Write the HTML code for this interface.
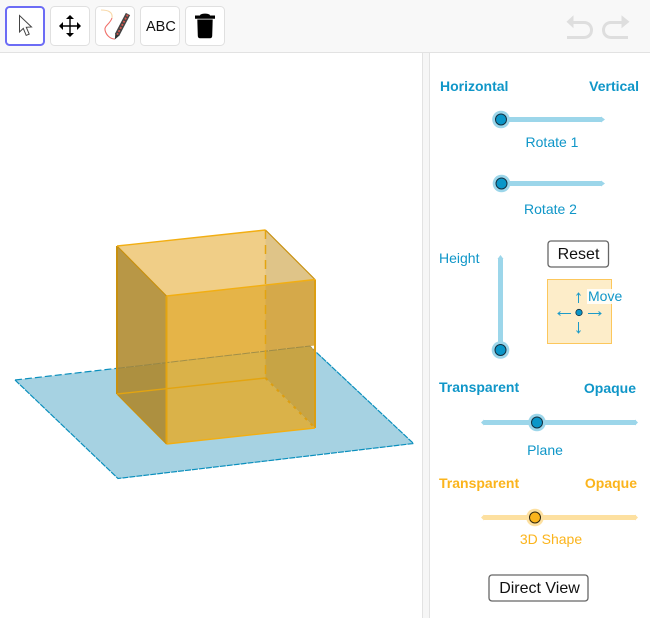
<!DOCTYPE html>
<html><head><meta charset="utf-8">
<style>
html,body{margin:0;padding:0;background:#fff;width:650px;height:620px;overflow:hidden}
svg{display:block;position:absolute;left:0;top:0}
text{font-family:"Liberation Sans",sans-serif;font-size:14px}
.b{font-weight:bold}
.c{fill:#0f96c8}
.o{fill:#fbb41c}
</style></head><body>
<svg width="650" height="620" viewBox="0 0 650 620" xmlns="http://www.w3.org/2000/svg">
<rect width="650" height="620" fill="#fff"/>
<!-- toolbar -->
<rect x="0" y="0" width="650" height="52" fill="#f8f8f8"/>
<rect x="0" y="52" width="650" height="1" fill="#e2e2e2"/>
<rect x="6" y="7" width="38" height="38" rx="3.5" fill="#fff" stroke="#6c6cf5" stroke-width="2"/>
<rect x="50.5" y="6.5" width="39" height="39" rx="4" fill="#fff" stroke="#e0e0e0"/>
<rect x="95.5" y="6.5" width="39" height="39" rx="4" fill="#fff" stroke="#e0e0e0"/>
<rect x="140.5" y="6.5" width="39" height="39" rx="4" fill="#fff" stroke="#e0e0e0"/>
<rect x="185.5" y="6.5" width="39" height="39" rx="4" fill="#fff" stroke="#e0e0e0"/>
<path d="M19.5 15.5V32l3.8-3.6 2.9 7 3-1.3-2.9-6.8 5.2-.3z" fill="#fff" stroke="#444" stroke-width="1"/>
<path d="M70 15l-4 4h8zM70 37l-4-4h8zM59 26l4-4v8zM81 26l-4-4v8z" fill="#000"/>
<path d="M70 17v18M61 26h18" stroke="#000" stroke-width="1.4" fill="none"/>
<path d="M112 18C110 24 104 26 105 30C106 35 110 39 115 39" stroke="#f0706a" stroke-width="1.100" fill="none"/>
<path d="M101 10C108 10 113 12 112 18" stroke="#f8d8a8" stroke-width="1.100" fill="none"/>
<path d="M117 35L128 14" stroke="#444" stroke-width="4.800" fill="none"/>
<path d="M117 35L128 14" stroke="#d8554c" stroke-width="1.800" fill="none" stroke-dasharray="2 1.500"/>
<path d="M114.800 39.500l.5-5.800 3.900 2.100z" fill="#333"/>
<text x="146" y="31" style="font-size:14.5px" fill="#111">ABC</text>
<path d="M195 15.500h20v3.200h-20z" fill="#000"/>
<path d="M200 15.500c0-2.500 10-2.500 10 0z" fill="#000"/>
<path d="M197.300 19.500h15.400l-.5 16.500c-.1 1.500-1 2.300-2.200 2.300h-10c-1.200 0-2.100-.8-2.200-2.300z" fill="#000"/>
<!-- undo redo -->
<g fill="none" stroke="#dedede" stroke-width="3">
<path d="M573 22.500h11c10 0 10 15 0 15h-17"/>
<path d="M622 22.500h-11c-10 0-10 15 0 15h17"/>
</g>
<path d="M566.500 21.800l7-6.500v13zM629.500 21.800l-8-6.500v13z" fill="#dedede"/>
<!-- divider -->
<rect x="422" y="53" width="8" height="565" fill="#f6f6f6"/>
<rect x="422" y="53" width="1" height="565" fill="#e2e2e2"/>
<rect x="429" y="53" width="1" height="565" fill="#e2e2e2"/>
<!-- plane -->
<polygon points="15,380 118,478.500 413.500,443.500 310,346" fill="#a6d2e2"/>
<path d="M15 380L118 478.500L413.500 443.500L316 352" fill="none" stroke="#0a8fbd" stroke-width="1.200" stroke-dasharray="6 1"/>
<path d="M15 380L117 368.300" fill="none" stroke="#0a8fbd" stroke-width="1.200" stroke-dasharray="7 3"/>
<!-- cube -->
<polygon points="117,246 265.500,230 315,279.500 166.500,296" fill="#f0ce87"/>
<polygon points="265.500,230 315,279.500 265.500,285" fill="#dfc488"/>
<polygon points="117,246 166.500,296 166.500,362.600 117,368.300" fill="#b89746"/>
<polygon points="117,368.300 166.500,362.600 166.500,444 117,394" fill="#ad9040"/>
<polygon points="166.500,296 265.500,285 265.500,351.200 166.500,362.600" fill="#e5b448"/>
<polygon points="166.500,362.600 265.500,351.200 265.500,432.800 166.500,444" fill="#dab249"/>
<polygon points="265.500,285 315,279.500 315,345.500 265.500,351.200" fill="#d5a94a"/>
<polygon points="265.500,351.200 310,346 315,351 315,428 265.500,378" fill="#c7a445"/>
<polygon points="265.500,378 315,428 265.500,433.500" fill="#dab249"/>
<path d="M117 368.300L310 346L315 351" fill="none" stroke="#8e8244" stroke-width="1" stroke-dasharray="8 1" opacity=".75"/>
<!-- edges -->
<g fill="none" stroke-linecap="butt">
<path d="M117 246V394" stroke="#c8900f" stroke-width="2"/>
<path d="M166.500 296V444" stroke="#e3a410" stroke-width="2"/>
<path d="M315 279.500V428" stroke="#dc9e12" stroke-width="2"/>
<path d="M117 246L166.500 296" stroke="#c8900f" stroke-width="1.200"/>
<path d="M117 394L166.500 444" stroke="#c8900f" stroke-width="1.200"/>
<path d="M265.500 230L315 279.500" stroke="#c8900f" stroke-width="1.200"/>
<path d="M117 246L265.500 230" stroke="#f2ae12" stroke-width="1.400"/>
<path d="M166.500 296L315 279.500" stroke="#f2ae12" stroke-width="1.400"/>
<path d="M166.500 444L315 428" stroke="#f2ae12" stroke-width="1.400"/>
<path d="M117 394L265.500 378" stroke="#e3a410" stroke-width="1.400"/>
<path d="M265.500 230V378" stroke="#e3a410" stroke-width="1.500" stroke-dasharray="9 6"/>
<path d="M265.500 378L315 428" stroke="#dc9e12" stroke-width="2" stroke-dasharray="3 5"/>
</g>
<!-- labels -->
<text class="b c" x="440" y="91">Horizontal</text>
<text class="b c" x="639" y="91" text-anchor="end">Vertical</text>
<text class="c" x="552" y="147" text-anchor="middle">Rotate 1</text>
<text class="c" x="550.500" y="214" text-anchor="middle">Rotate 2</text>
<text class="c" x="439" y="263">Height</text>
<text class="b c" x="439" y="392">Transparent</text>
<text class="b c" x="636" y="393" text-anchor="end">Opaque</text>
<text class="c" x="545" y="455" text-anchor="middle">Plane</text>
<text class="b o" x="439" y="488">Transparent</text>
<text class="b o" x="637" y="488" text-anchor="end">Opaque</text>
<text class="o" x="551" y="544" text-anchor="middle">3D Shape</text>
<!-- sliders -->
<g fill="none" stroke="#9cd6ea" stroke-width="5">
<path d="M501 119.500H602"/><path d="M501 183.500H602"/><path d="M500.500 350V258"/><path d="M484 422.500H636"/>
</g>
<path d="M601 116.500l4 3-4 3zM601 180.500l4 3-4 3zM497.500 259l3-4 3 4zM484 419.500l-3 3 3 3zM635 419.500l3 3-3 3z" fill="#9cd6ea"/>
<path d="M484 517.500H636" stroke="#fde0a0" stroke-width="5" fill="none"/>
<path d="M484 514.500l-3 3 3 3zM635 514.500l3 3-3 3z" fill="#fde0a0"/>
<circle cx="501" cy="119.500" r="8.800" fill="#9cd6ea"/>
<circle cx="501" cy="119.500" r="5.500" fill="#0a96c8" stroke="#143040" stroke-width="1"/>
<circle cx="501.500" cy="183.500" r="8.800" fill="#9cd6ea"/>
<circle cx="501.500" cy="183.500" r="5.500" fill="#0a96c8" stroke="#143040" stroke-width="1"/>
<circle cx="500.500" cy="350" r="8.800" fill="#9cd6ea"/>
<circle cx="500.500" cy="350" r="5.500" fill="#0a96c8" stroke="#143040" stroke-width="1"/>
<circle cx="537" cy="422.500" r="8.800" fill="#9cd6ea"/>
<circle cx="537" cy="422.500" r="5.500" fill="#0a96c8" stroke="#143040" stroke-width="1"/>
<circle cx="535" cy="517.500" r="8.800" fill="#fde0a0"/>
<circle cx="535" cy="517.500" r="5.500" fill="#fbb41c" stroke="#302810" stroke-width="1"/>
<!-- reset -->
<rect x="548" y="241" width="60.500" height="26" rx="3" fill="#fff" stroke="#666" stroke-width="1.300"/>
<text x="578.500" y="259" text-anchor="middle" style="font-size:16px" fill="#111">Reset</text>
<rect x="547.500" y="279.500" width="64" height="64" fill="#fdedc9" stroke="#fcc75c"/>
<rect x="587" y="289" width="36" height="15" fill="#fff" opacity=".85"/>
<text class="c" x="588" y="301">Move</text>
<g fill="none" stroke="#1d9bc8" stroke-width="1">
<path d="M578.500 303V293M576.500 295.500l2-2.500 2 2.500"/>
<path d="M578.500 322V333M576.500 330.500l2 2.500 2-2.500"/>
<path d="M571 313.500H558M560.500 311.500l-2.500 2 2.500 2"/>
<path d="M588 313.500H601M598.500 311.500l2.500 2-2.500 2"/>
</g>
<circle cx="579" cy="312.500" r="3.200" fill="#0a96c8" stroke="#143040" stroke-width=".8"/>
<!-- direct view -->
<rect x="489" y="575" width="99" height="26" rx="3" fill="#fff" stroke="#666" stroke-width="1.300"/>
<text x="539.500" y="593" text-anchor="middle" style="font-size:16px" fill="#111">Direct View</text>
</svg>
</body></html>
